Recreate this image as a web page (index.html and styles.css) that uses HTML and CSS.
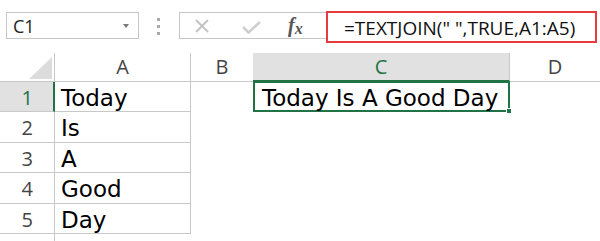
FILE: index.html
```html
<!DOCTYPE html>
<html lang="en">
<head>
    <meta charset="UTF-8">
    <title>TEXTJOIN</title>
    <link rel="stylesheet" href="styles.css">
</head>
<body>

    <div class="toolbar">
        <div class="namebox">
            <span>C1</span>
            <span class="arrow"></span>
        </div>
        <div class="dots"><i></i><i></i><i></i></div>
        <div class="buttons">
            <svg class="btn-x" width="14" height="14" viewBox="0 0 14 14">
                <path d="M1 1 L13 13 M13 1 L1 13" stroke="#c4c4c4" stroke-width="2" fill="none"/>
            </svg>
            <svg class="btn-ok" width="19" height="13" viewBox="0 0 19 13">
                <path d="M1 6 L6.5 11.5 L18 1" stroke="#cfcfcf" stroke-width="2.6" fill="none"/>
            </svg>
            <span class="fx">f<span>x</span></span>
        </div>
        <div class="formula">=TEXTJOIN(" ",TRUE,A1:A5)</div>
    </div>

    <div class="sheet">
        <div class="corner"><span class="tri"></span></div>
        <div class="colhead bordered">A</div>
        <div class="colhead">B</div>
        <div class="colhead selected">C</div>
        <div class="colhead">D</div>

        <div class="rowhead active">1</div>
        <div class="cell bordered">Today</div>
        <div class="cell"></div>
        <div class="cell current">Today Is A Good Day<span class="handle"></span></div>
        <div class="cell"></div>

        <div class="rowhead">2</div>
        <div class="cell bordered">Is</div>
        <div class="cell"></div>
        <div class="cell"></div>
        <div class="cell"></div>

        <div class="rowhead">3</div>
        <div class="cell bordered">A</div>
        <div class="cell"></div>
        <div class="cell"></div>
        <div class="cell"></div>

        <div class="rowhead">4</div>
        <div class="cell bordered">Good</div>
        <div class="cell"></div>
        <div class="cell"></div>
        <div class="cell"></div>

        <div class="rowhead">5</div>
        <div class="cell bordered">Day</div>
        <div class="cell"></div>
        <div class="cell"></div>
        <div class="cell"></div>

        <div class="rowhead last"></div>
    </div>

</body>
</html>
```

FILE: styles.css
```css
* {
    box-sizing: border-box;
}

body {
    margin: 0;
    background: #fff;
    font-family: 'Open Sans', sans-serif;
    width: 600px;
    height: 241px;
    overflow: hidden;
}

/* formula bar */
.toolbar {
    display: flex;
    align-items: flex-start;
    height: 53px;
    padding-left: 6px;
}

.namebox {
    margin-top: 12px;
    width: 133px;
    height: 27px;
    border: 1px solid #c6c6c6;
    display: flex;
    align-items: center;
    justify-content: space-between;
    padding: 0 9px 0 6px;
    font-size: 18px;
    color: #222;
}

.namebox .arrow {
    width: 0;
    height: 0;
    border-left: 3px solid transparent;
    border-right: 3px solid transparent;
    border-top: 4px solid #777;
}

.dots {
    margin: 18px 0 0 18px;
    width: 22px;
    display: flex;
    flex-direction: column;
    gap: 4px;
}

.dots i {
    display: block;
    width: 3px;
    height: 3px;
    background: #aaa;
}

.buttons {
    margin-top: 12px;
    width: 147px;
    height: 27px;
    border: 1px solid #c6c6c6;
    border-right: none;
    display: flex;
    align-items: center;
    padding-left: 15px;
}

.btn-x {
    margin-right: 33px;
}

.btn-ok {
    margin-right: 27px;
    margin-top: 3px;
}

.fx {
    font-family: 'Liberation Serif', serif;
    font-style: italic;
    font-weight: bold;
    font-size: 20px;
    color: #555;
}

.fx span {
    font-size: 16px;
    position: relative;
    top: 2px;
}

.formula {
    margin-top: 11px;
    width: 271px;
    height: 32px;
    border: 2px solid #e8393c;
    padding: 2px 0 0 16px;
    font-size: 19px;
    color: #111;
    white-space: nowrap;
    line-height: 26px;
}

/* sheet */
.sheet {
    display: grid;
    grid-template-columns: 55px 136px 62px 257px 90px;
    grid-template-rows: 29px repeat(5, 30.4px) 8px;
}

.corner {
    border-right: 1px solid #c8c8c8;
    border-bottom: 1px solid #c8c8c8;
    position: relative;
}

.tri {
    position: absolute;
    right: 2px;
    bottom: 2px;
    width: 0;
    height: 0;
    border-left: 23px solid transparent;
    border-bottom: 22px solid #dcdcdc;
}

.colhead {
    border-bottom: 1px solid #c8c8c8;
    text-align: center;
    font-size: 20px;
    line-height: 28px;
    color: #444;
}

.colhead.bordered {
    border-right: 1px solid #c8c8c8;
}

.colhead.selected {
    background: #e1e1e1;
    color: #217346;
    border-bottom: 2px solid #217346;
    border-right: 1px solid #c8c8c8;
}

.rowhead {
    border-right: 1px solid #c8c8c8;
    border-bottom: 1px solid #c8c8c8;
    text-align: right;
    padding-right: 21px;
    font-size: 20px;
    line-height: 31px;
    color: #444;
}

.rowhead.active {
    background: #e1e1e1;
    color: #217346;
    border-right: 2px solid #217346;
    padding-right: 20px;
}

.rowhead.last {
    border-bottom: none;
}

.cell {
    font-family: 'DejaVu Sans', sans-serif;
    font-size: 23px;
    line-height: 33px;
    color: #000;
    padding-left: 6px;
    white-space: nowrap;
}

.cell.bordered {
    border-right: 1px solid #c8c8c8;
    border-bottom: 1px solid #c8c8c8;
}

.cell.current {
    border: 2px solid #217346;
    margin-top: -1px;
    padding-left: 7px;
    line-height: 30px;
    position: relative;
}

.handle {
    position: absolute;
    right: -4px;
    bottom: -4px;
    width: 6px;
    height: 6px;
    background: #217346;
    border: 1px solid #fff;
}
```
